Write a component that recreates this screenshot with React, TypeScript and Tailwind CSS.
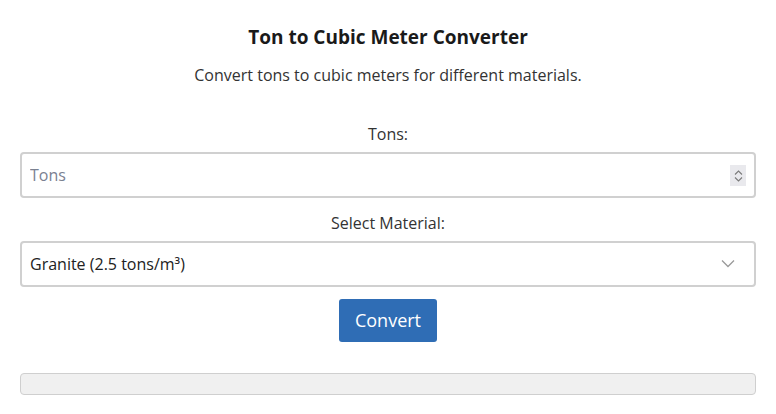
import { useState } from "react";

const materials = [
  { name: "Granite", density: 2.5 },
  { name: "Sand", density: 1.6 },
  { name: "Gravel", density: 1.8 },
  { name: "Concrete", density: 2.4 },
  { name: "Water", density: 1.0 },
];

export default function App() {
  const [tons, setTons] = useState("");
  const [material, setMaterial] = useState("Granite");
  const [result, setResult] = useState("");

  const convert = () => {
    const m = materials.find((x) => x.name === material);
    const t = parseFloat(tons);
    if (!m || isNaN(t)) {
      setResult("");
      return;
    }
    setResult(`${(t / m.density).toFixed(2)} m³`);
  };

  return (
    <div className="min-h-screen bg-white px-5 pt-[23px] text-[#333] [font-family:'Open_Sans','Noto_Sans',sans-serif]">
      <h2 className="text-center text-[19px] font-bold leading-[28px] text-[#1a1a1a]">
        Ton to Cubic Meter Converter
      </h2>
      <p className="mt-[12px] text-center text-[16px] leading-[24px] text-[#333]">
        Convert tons to cubic meters for different materials.
      </p>

      <label className="mt-[35px] block text-center text-[16px] leading-[24px] text-[#333]">Tons:</label>
      <div className="relative mt-[6px]">
        <input
          type="text"
          inputMode="decimal"
          value={tons}
          onChange={(e) => setTons(e.target.value)}
          placeholder="Tons"
          className="block h-[46px] w-full rounded-[4px] border-2 border-[#d0d0d0] bg-white px-[8px] text-[16px] text-[#333] outline-none placeholder:text-[#7a8191]"
        />
        <div className="absolute right-[10px] top-[13px] flex h-[21px] w-[16px] flex-col items-center justify-center bg-[#e9e9ed]">
          <svg width="9" height="5" viewBox="0 0 9 5" fill="none" stroke="#7a7a7a" strokeWidth="1.1">
            <path d="M1 4.5 4.5 1 8 4.5" />
          </svg>
          <svg width="9" height="5" viewBox="0 0 9 5" fill="none" stroke="#7a7a7a" strokeWidth="1.1" className="mt-[2px]">
            <path d="M1 0.5 4.5 4 8 0.5" />
          </svg>
        </div>
      </div>

      <label className="mt-[13px] block text-center text-[16px] leading-[24px] text-[#333]">Select Material:</label>
      <div className="relative mt-[6px]">
        <select
          value={material}
          onChange={(e) => setMaterial(e.target.value)}
          className="block h-[46px] w-full appearance-none rounded-[4px] border-2 border-[#d0d0d0] bg-white px-[8px] text-[16px] text-[#222] outline-none"
        >
          {materials.map((m) => (
            <option key={m.name} value={m.name}>
              {m.name} ({m.density} tons/m³)
            </option>
          ))}
        </select>
        <svg
          className="pointer-events-none absolute right-[21px] top-[18px]"
          width="14"
          height="9"
          viewBox="0 0 14 9"
          fill="none"
          stroke="#9a9a9a"
          strokeWidth="1.3"
        >
          <path d="M1 1.5 7 7.5 13 1.5" />
        </svg>
      </div>

      <div className="mt-[12px] flex justify-center">
        <button
          onClick={convert}
          className="h-[43px] w-[98px] rounded-[3px] bg-[#2f6db5] text-[18px] text-white"
        >
          Convert
        </button>
      </div>

      <div className="mt-[31px] min-h-[22px] rounded-[4px] border border-[#cfcfcf] bg-[#f0f0f0] px-3 text-[16px]">
        {result}
      </div>
    </div>
  );
}
